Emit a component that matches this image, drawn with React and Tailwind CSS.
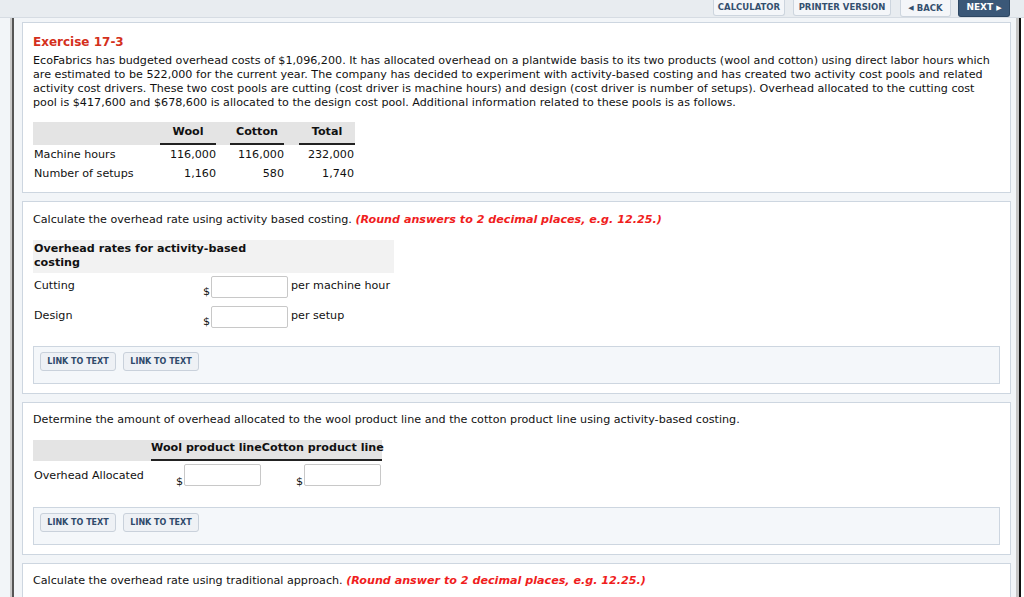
import React from "react";

const font = { fontFamily: '"DejaVu Sans", Verdana, sans-serif' };

const TopButton = ({ children, dark, className }) => (
  <div
    className={
      (dark
        ? "h-[17px] flex items-center justify-center rounded-b-[3px] bg-[#3b5878] border border-[#2d4763] border-t-0 text-white text-[9px] font-bold "
        : "h-[16px] flex items-center justify-center rounded-b-[3px] bg-[#f4f6f9] border border-[#cdd5de] border-t-0 text-[#34506f] text-[8.5px] font-bold ") +
      className
    }
  >
    {children}
  </div>
);

const LinkButton = () => (
  <div className="h-[19px] w-[76px] flex items-center justify-center rounded-[3px] bg-[#eef1f5] border border-[#c9d1db] text-[#2f4a6b] text-[8px] font-bold">
    LINK TO TEXT
  </div>
);

const LinkBox = ({ className }) => (
  <div className={"h-[38px] bg-[#f4f7fa] border border-[#cdd6e0] flex items-start gap-[7px] pl-[6px] pt-[5px] " + className}>
    <LinkButton />
    <LinkButton />
  </div>
);

const Panel = ({ className, children }) => (
  <div className={"shrink-0 bg-white border border-[#cdd6e0] px-[10px] " + className}>{children}</div>
);

const Input = () => (
  <div className="w-[77px] h-[22px] border border-[#c8c8c8] rounded-[2px] bg-white" />
);

export default function App() {
  return (
    <div
      className="w-[1024px] h-[597px] overflow-hidden bg-[#f2f5f8] flex flex-col text-[11.15px] text-[#111]"
      style={font}
    >
      <div className="h-[18px] shrink-0 bg-[#e8ecf0] border-b border-[#d6dce3] flex justify-end items-start pr-[14px]">
        <TopButton className="w-[72px]">CALCULATOR</TopButton>
        <TopButton className="w-[98px] ml-[8px]">PRINTER VERSION</TopButton>
        <TopButton className="w-[51px] ml-[9px] h-[17px]">
          <span className="text-[7px] mr-[3px]">◀</span>BACK
        </TopButton>
        <TopButton dark className="w-[52px] ml-[7px]">
          NEXT<span className="text-[7px] ml-[3px]">▶</span>
        </TopButton>
      </div>
      <div className="flex flex-1 min-h-0">
        <div className="w-[10px] shrink-0" />
        <div className="w-[4px] shrink-0 bg-[#c9c9c9] border-r-2 border-[#555]" />
        <div className="flex-1 min-w-0 pl-[8px] pr-[5px] pt-[4px] flex flex-col gap-[8px] overflow-hidden">
          <Panel className="pt-[12px] h-[171px]">
            <div className="text-[12px] font-bold text-[#d4301c] leading-[14px]">Exercise 17-3</div>
            <p className="mt-[5px] leading-[14px] pr-[4px]">
              EcoFabrics has budgeted overhead costs of $1,096,200. It has allocated overhead on a plantwide basis to its two products (wool and cotton) using direct labor hours which are estimated to be 522,000 for the current year. The company has decided to experiment with activity-based costing and has created two activity cost pools and related activity cost drivers. These two cost pools are cutting (cost driver is machine hours) and design (cost driver is number of setups). Overhead allocated to the cutting cost pool is $417,600 and $678,600 is allocated to the design cost pool. Additional information related to these pools is as follows.
            </p>
            <table className="mt-[12px] border-collapse">
              <thead>
                <tr className="bg-[#e4e4e4] h-[21px]">
                  <th className="w-[127px]"></th>
                  <th className="w-[56px] font-bold">
                    <div className="border-b-2 border-[#222] pb-[2px] pt-[2px] text-center">Wool</div>
                  </th>
                  <th className="w-[14px]"></th>
                  <th className="w-[54px] font-bold">
                    <div className="border-b-2 border-[#222] pb-[2px] pt-[2px] text-center">Cotton</div>
                  </th>
                  <th className="w-[15px]"></th>
                  <th className="w-[56px] font-bold">
                    <div className="border-b-2 border-[#222] pb-[2px] pt-[2px] text-center">Total</div>
                  </th>
                </tr>
              </thead>
              <tbody>
                <tr className="h-[20px]">
                  <td className="pl-[1px] pt-[1px]">Machine hours</td>
                  <td className="text-right pt-[1px]">116,000</td>
                  <td></td>
                  <td className="text-right pt-[1px]">116,000</td>
                  <td></td>
                  <td className="text-right pt-[1px] pr-[1px]">232,000</td>
                </tr>
                <tr className="h-[20px]">
                  <td className="pl-[1px]">Number of setups</td>
                  <td className="text-right">1,160</td>
                  <td></td>
                  <td className="text-right">580</td>
                  <td></td>
                  <td className="text-right pr-[1px]">1,740</td>
                </tr>
              </tbody>
            </table>
          </Panel>

          <Panel className="pt-[11px] h-[193px]">
            <p className="leading-[14px]">
              Calculate the overhead rate using activity based costing.{" "}
              <span className="text-[#f01d1d] font-bold italic">(Round answers to 2 decimal places, e.g. 12.25.)</span>
            </p>
            <div className="mt-[13px] w-[361px] bg-[#f2f2f2] font-bold leading-[14px] pt-[2px] pb-[3px] pl-[1px]">
              Overhead rates for activity-based
              <br />
              costing
            </div>
            <div className="flex items-start mt-[3px] h-[30px]">
              <div className="w-[170px] pl-[1px] pt-[2px]">Cutting</div>
              <div className="pt-[8px] w-[8px]">$</div>
              <Input />
              <div className="pl-[3px] pt-[2px]">per machine hour</div>
            </div>
            <div className="flex items-start h-[30px]">
              <div className="w-[170px] pl-[1px] pt-[2px]">Design</div>
              <div className="pt-[8px] w-[8px]">$</div>
              <Input />
              <div className="pl-[3px] pt-[2px]">per setup</div>
            </div>
            <LinkBox className="mt-[10px]" />
          </Panel>

          <Panel className="pt-[10px] h-[153px]">
            <p className="leading-[14px]">
              Determine the amount of overhead allocated to the wool product line and the cotton product line using activity-based costing.
            </p>
            <div className="mt-[13px] w-[349px] h-[21px] bg-[#e4e4e4] flex items-end whitespace-nowrap">
              <div className="w-[118px] shrink-0" />
              <div className="flex w-[231px] border-b-2 border-[#222] font-bold pb-[4px] leading-[14px]">
                <span className="w-[112px]">Wool product line</span>
                <span>Cotton product line</span>
              </div>
            </div>
            <div className="flex items-start mt-[3px] h-[24px]">
              <div className="w-[143px] pl-[1px] pt-[4px]">Overhead Allocated</div>
              <div className="pt-[10px] w-[8px]">$</div>
              <Input />
              <div className="w-[35px]" />
              <div className="pt-[10px] w-[8px]">$</div>
              <Input />
            </div>
            <LinkBox className="mt-[19px]" />
          </Panel>

          <Panel className="pt-[10px] h-[60px]">
            <p className="leading-[14px]">
              Calculate the overhead rate using traditional approach.{" "}
              <span className="text-[#f01d1d] font-bold italic">(Round answer to 2 decimal places, e.g. 12.25.)</span>
            </p>
          </Panel>
        </div>
        <div className="w-[3px] shrink-0 bg-[#c6c6c6]" />
        <div className="w-[2px] shrink-0 bg-[#111]" />
        <div className="w-[3px] shrink-0 bg-white" />
      </div>
    </div>
  );
}
